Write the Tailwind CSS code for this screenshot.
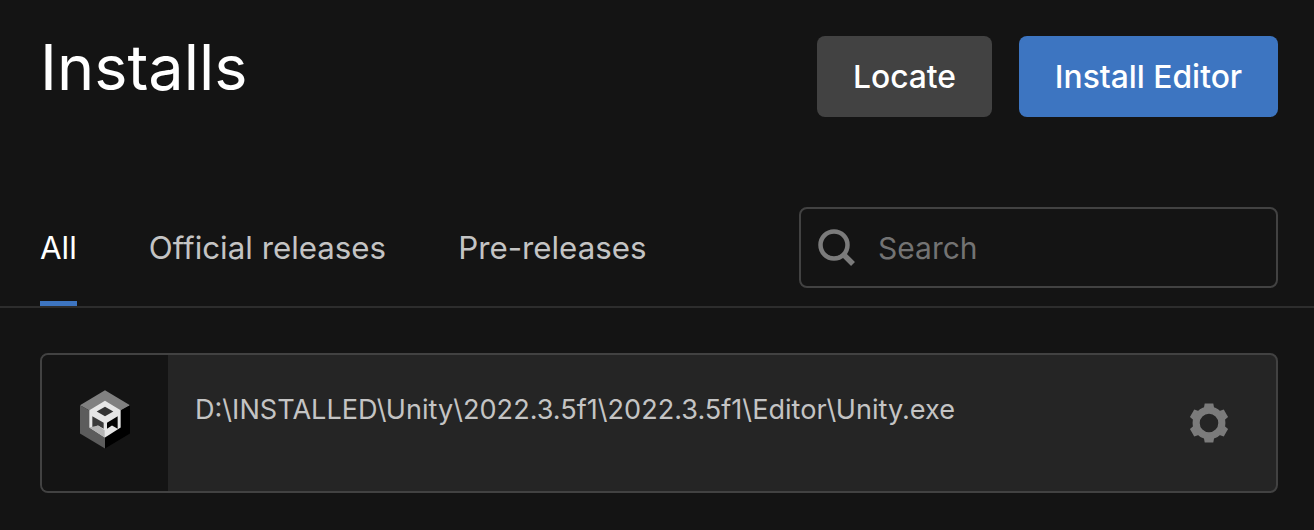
<!DOCTYPE html>
<html lang="en">
<head>
    <meta charset="UTF-8" />
    <meta name="viewport" content="width=device-width, initial-scale=1.0" />
    <title>Installs</title>
    <script src="https://cdn.jsdelivr.net/npm/@tailwindcss/browser@4"></script>
</head>
<body class="bg-[#141414] h-[530px] overflow-hidden font-['Inter',sans-serif]">

    <!-- Header -->
    <div class="flex justify-between items-start pl-10 pr-9 pt-9 h-[171px]">
        <h1 class="text-[63px] leading-[62px] text-white">Installs</h1>
        <div class="flex gap-[27px]">
            <button class="w-[175px] h-[81px] rounded-lg bg-[#424242] text-white text-[31.8px] font-medium">Locate</button>
            <button class="w-[259px] h-[81px] rounded-lg bg-[#3d75c1] text-white text-[31.8px] font-medium">Install Editor</button>
        </div>
    </div>

    <!-- Tabs -->
    <div class="flex justify-between items-start pl-10 pr-9 h-[137px] border-b-2 border-[#2d2d2d]">
        <div class="flex gap-[72px] h-[135px] text-[31.3px] leading-[40px] text-[#c4c4c4]">
            <div class="relative pt-[57px] text-white">All
                <div class="absolute left-0 right-0 bottom-0 h-[5px] bg-[#3d75c1]"></div>
            </div>
            <div class="pt-[57px]">Official releases</div>
            <div class="pt-[57px]">Pre-releases</div>
        </div>
        <div class="mt-9 w-[479px] h-[81px] flex items-center rounded-lg border-2 border-[#424242]">
            <svg class="ml-[17px] w-[38px] h-[38px]" viewBox="0 0 38 38" fill="none" stroke="#7b7b7b" stroke-width="4.5">
                <circle cx="16" cy="16" r="13.5" />
                <path d="M25.5 25.5 35 35" stroke-width="5.5" />
            </svg>
            <span class="ml-[22px] mt-px text-[30px] text-[#737373]">Search</span>
        </div>
    </div>

    <!-- Install row -->
    <div class="ml-10 mr-9 mt-[45px] h-[140px] flex rounded-lg border-2 border-[#424242] overflow-hidden bg-[#252525]">
        <div class="w-[126px] bg-[#141414] flex items-center justify-center">
            <svg class="w-[50px] h-[59px] mb-2" viewBox="150 120 150 176">
                <path d="M225 120 300 165 225 207 150 165Z" fill="#808080" />
                <path d="M150 165 225 207V295L150 250Z" fill="#5c5c5c" />
                <path d="M300 165 225 207V295L300 250Z" fill="#000" />
                <path d="M225 152 272 180V232L225 262 178 232V180Z" fill="#e6e6e6" />
                <path d="M225 170 250 184 225 198 200 184Z" fill="#333" />
                <path d="M187 198 221 218V236L204 226 187 236Z" fill="#3a3a3a" />
                <path d="M263 198 231 218V236L246 226 263 236Z" fill="#050505" />
                <path d="M178 232 204 226 224 240V262Z" fill="#b5b5b5" />
            </svg>
        </div>
        <div class="flex-1 pl-[27px] pt-[36px] text-[27.1px] leading-[38px] text-[#c4c4c4]">D:\INSTALLED\Unity\2022.3.5f1\2022.3.5f1\Editor\Unity.exe</div>
        <div class="w-[132px] flex items-center justify-center pr-[2px]">
            <svg class="w-[40px] h-[42px]" viewBox="-21 -21 42 42" fill="#7b7b7b">
                <circle r="13.5" fill="none" stroke="#7b7b7b" stroke-width="7.5" />
                <path d="M-5.5 -15 -4.5 -20.5H4.5L5.5 -15Z" />
                <path d="M-5.5 -15 -4.5 -20.5H4.5L5.5 -15Z" transform="rotate(60)" />
                <path d="M-5.5 -15 -4.5 -20.5H4.5L5.5 -15Z" transform="rotate(120)" />
                <path d="M-5.5 -15 -4.5 -20.5H4.5L5.5 -15Z" transform="rotate(180)" />
                <path d="M-5.5 -15 -4.5 -20.5H4.5L5.5 -15Z" transform="rotate(240)" />
                <path d="M-5.5 -15 -4.5 -20.5H4.5L5.5 -15Z" transform="rotate(300)" />
            </svg>
        </div>
    </div>

</body>
</html>
